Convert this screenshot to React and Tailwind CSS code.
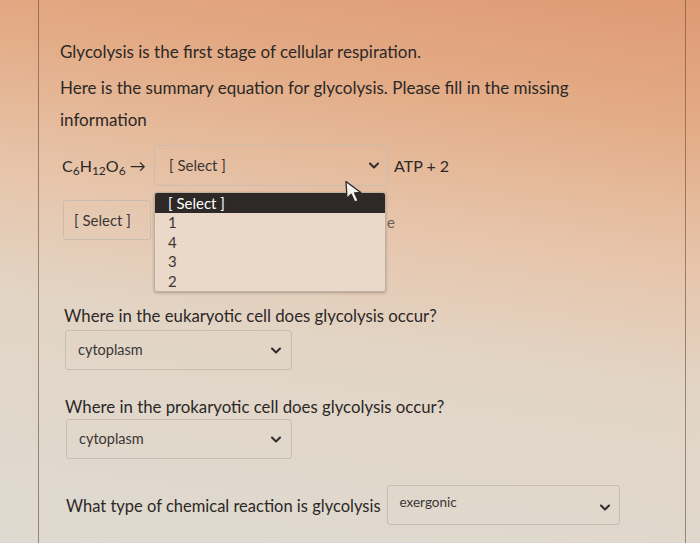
function Chevron({ className = "" }) {
  return (
    <svg viewBox="0 0 10 6" className={"w-[10px] h-[7px] shrink-0 " + className}>
      <path d="M1 1l4 4 4-4" fill="none" stroke="#2f2b29" strokeWidth="2" strokeLinecap="round" strokeLinejoin="round" />
    </svg>
  );
}

function SelectBox({ value, className = "", textClass = "", chevronClass = "" }) {
  return (
    <div className={"flex items-center justify-between border border-[#c9bdb0] rounded-[3px] px-3 " + className}>
      <span className={"text-[#3b3633] " + textClass}>{value}</span>
      <Chevron className={chevronClass} />
    </div>
  );
}

export default function App() {
  return (
    <div className="w-[700px] h-[543px] overflow-hidden bg-[linear-gradient(188deg,#de9a73_0%,#e3ac87_20%,#e7c5ab_42%,#e2d5c6_62%,#dfdad1_100%)] font-['Lato','Open_Sans',sans-serif] text-[#2c2826]">
      <div className="relative ml-[38px] mr-[14px] h-full border-l border-r border-[#6d4a3a]/60 pl-[21px] pt-[40px]">
        <p className="text-[17px] leading-[24px]">Glycolysis is the first stage of cellular respiration.</p>
        <p className="mt-[8px] text-[17px] leading-[32px] w-[540px]">Here is the summary equation for glycolysis. Please fill in the missing information</p>

        <div className="mt-[9px] flex items-center text-[16px]">
          <span className="ml-[2px] w-[92px] whitespace-nowrap">
            C<sub className="text-[12px] -bottom-[3px]">6</sub>H<sub className="text-[12px] -bottom-[3px]">12</sub>O<sub className="text-[12px] -bottom-[3px]">6</sub> →
          </span>
          <SelectBox value="[ Select ]" className="w-[234px] h-[41px] items-start pt-[11px] pl-[14px] pr-[8px]" textClass="text-[15px] leading-[17px]" chevronClass="mt-[5px]" />
          <span className="ml-[6px] text-[16px]">ATP + 2</span>
        </div>

        <div className="mt-[14px] h-[40px] flex items-center">
          <div className="ml-[3px] w-[88px] h-[40px] border border-[#c9bdb0] rounded-[3px] flex items-center pl-[10px] text-[15px] text-[#3b3633]">[ Select ]</div>
          <span className="ml-[236px] mt-[4px] text-[15px] text-[#6a615c]">e</span>
        </div>

        <div className="absolute left-[115px] top-[192px] w-[232px] h-[100px] bg-[#ead8c9] border border-[#bfb0a2] rounded-[3px] shadow-[0_1px_3px_rgba(0,0,0,0.25)] text-[15px] leading-[19.5px] overflow-hidden">
          <div className="bg-[#2e2927] text-white pl-[13px] h-[20px] leading-[20px]">[ Select ]</div>
          <div className="pl-[13px] text-[#3b3633]">1</div>
          <div className="pl-[13px] text-[#3b3633]">4</div>
          <div className="pl-[13px] text-[#3b3633]">3</div>
          <div className="pl-[13px] text-[#3b3633]">2</div>
        </div>

        <svg className="absolute left-[305px] top-[180px] w-[20px] h-[26px]" viewBox="0 0 20 26">
          <path d="M2 1.5l1 17 4.2-4.3 3.6 8 3.4-1.5-3.6-7.8 6.2-.4z" fill="#f4f0ec" stroke="#2c2826" strokeWidth="1.3" strokeLinejoin="round" />
        </svg>

        <p className="mt-[64px] ml-[4px] text-[16.8px] leading-[24px]">Where in the eukaryotic cell does glycolysis occur?</p>
        <SelectBox value="cytoplasm" className="mt-[2px] ml-[5px] w-[227px] h-[40px] pr-[10px]" textClass="text-[14.5px]" />

        <p className="mt-[25px] ml-[5px] text-[16.8px] leading-[24px]">Where in the prokaryotic cell does glycolysis occur?</p>
        <SelectBox value="cytoplasm" className="ml-[6px] w-[226px] h-[40px] pr-[10px]" textClass="text-[14.5px]" />

        <div className="mt-[26px] ml-[6px] flex items-center">
          <span className="text-[16.5px] pt-[3px]">What type of chemical reaction is glycolysis</span>
          <SelectBox value="exergonic" className="ml-[6px] w-[233px] h-[40px] items-start pt-[8px] pl-[12px] pr-[9px]" textClass="text-[13.5px] leading-[16px]" chevronClass="mt-[10px]" />
        </div>
      </div>
    </div>
  );
}
